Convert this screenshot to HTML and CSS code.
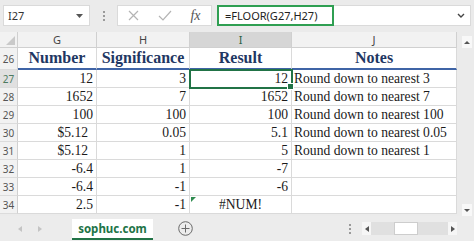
FILE: index.html
```html
<!DOCTYPE html>
<html lang="en">
<head>
    <meta charset="UTF-8">
    <title>FLOOR function</title>
    <link rel="stylesheet" href="styles.css">
</head>
<body>
    <div class="formula-bar">
        <div class="name-box">
            <span>I27</span>
            <svg width="7" height="4" viewBox="0 0 7 4"><path d="M0 0h7L3.5 4z" fill="#555"/></svg>
        </div>
        <div class="grip"><i></i><i></i><i></i></div>
        <div class="fx-box">
            <span class="fx-btn">
                <svg width="11" height="11" viewBox="0 0 11 11"><path d="M1 1l9 9M10 1l-9 9" stroke="#b4b4b4" stroke-width="1.2"/></svg>
            </span>
            <span class="fx-btn">
                <svg width="14" height="11" viewBox="0 0 14 11"><path d="M1 6l4 4 8-9" stroke="#b4b4b4" stroke-width="1.2" fill="none"/></svg>
            </span>
            <span class="fx-btn fx">fx</span>
        </div>
        <div class="formula">
            <span class="formula-text">=FLOOR(G27,H27)</span>
            <svg class="chevron" width="8" height="5" viewBox="0 0 8 5"><path d="M1 1l3 3 3-3" stroke="#444" stroke-width="1.4" fill="none"/></svg>
        </div>
    </div>

    <div class="workspace">
        <div class="sheet">
            <div class="corner"></div>
            <div class="col-head">G</div>
            <div class="col-head">H</div>
            <div class="col-head selected">I</div>
            <div class="col-head">J</div>

            <div class="row-head">26</div>
            <div class="cell title">Number</div>
            <div class="cell title">Significance</div>
            <div class="cell title">Result</div>
            <div class="cell title">Notes</div>

            <div class="row-head selected">27</div>
            <div class="cell num">12</div>
            <div class="cell num">3</div>
            <div class="cell num active">12</div>
            <div class="cell">Round down to nearest 3</div>

            <div class="row-head">28</div>
            <div class="cell num">1652</div>
            <div class="cell num">7</div>
            <div class="cell num">1652</div>
            <div class="cell">Round down to nearest 7</div>

            <div class="row-head">29</div>
            <div class="cell num">100</div>
            <div class="cell num">100</div>
            <div class="cell num">100</div>
            <div class="cell">Round down to nearest 100</div>

            <div class="row-head">30</div>
            <div class="cell num cur">$5.12</div>
            <div class="cell num">0.05</div>
            <div class="cell num">5.1</div>
            <div class="cell">Round down to nearest 0.05</div>

            <div class="row-head">31</div>
            <div class="cell num cur">$5.12</div>
            <div class="cell num">1</div>
            <div class="cell num">5</div>
            <div class="cell">Round down to nearest 1</div>

            <div class="row-head">32</div>
            <div class="cell num">-6.4</div>
            <div class="cell num">1</div>
            <div class="cell num">-7</div>
            <div class="cell"></div>

            <div class="row-head">33</div>
            <div class="cell num">-6.4</div>
            <div class="cell num">-1</div>
            <div class="cell num">-6</div>
            <div class="cell"></div>

            <div class="row-head">34</div>
            <div class="cell num">2.5</div>
            <div class="cell num">-1</div>
            <div class="cell error">#NUM!</div>
            <div class="cell"></div>
        </div>

        <div class="vscroll">
            <span class="arrow-btn up"></span>
            <span class="arrow-btn down"></span>
        </div>
    </div>

    <div class="tab-bar">
        <div class="tab-nav">
            <span class="tri left"></span>
            <span class="tri right"></span>
        </div>
        <div class="tab">sophuc.com</div>
        <div class="add-sheet">
            <svg width="15" height="15" viewBox="0 0 15 15">
                <circle cx="7.5" cy="7.5" r="6.8" stroke="#6a6a6a" fill="none"/>
                <path d="M7.5 3.5v8M3.5 7.5h8" stroke="#6a6a6a"/>
            </svg>
        </div>
        <div class="hscroll">
            <div class="grip small"><i></i><i></i><i></i></div>
            <span class="h-btn"><span class="tri left dark"></span></span>
            <div class="track"><span class="thumb"></span></div>
            <span class="h-btn"><span class="tri right dark"></span></span>
        </div>
    </div>
</body>
</html>
```

FILE: styles.css
```css
* {
    box-sizing: border-box;
}
body {
    margin: 0;
    width: 474px;
    height: 241px;
    overflow: hidden;
    background: #ebebeb;
    font-family: "Noto Sans", sans-serif;
    color: #222;
}

/* formula bar */
.formula-bar {
    display: flex;
    align-items: flex-start;
    height: 32px;
    padding: 5px 3px 0 3px;
}
.name-box {
    width: 87px;
    height: 21px;
    background: #fff;
    border: 1px solid #dadada;
    display: flex;
    align-items: center;
    justify-content: space-between;
    padding: 0 6px 0 4px;
    font-size: 11px;
    color: #333;
}
.grip {
    width: 27px;
    height: 21px;
    display: flex;
    flex-direction: column;
    align-items: center;
    justify-content: center;
    gap: 2px;
}
.grip i {
    width: 2px;
    height: 2px;
    background: #9a9a9a;
}
.fx-box {
    width: 95px;
    height: 21px;
    background: #fff;
    border: 1px solid #dadada;
    display: flex;
    align-items: center;
}
.fx-btn {
    width: 31px;
    display: flex;
    justify-content: center;
    align-items: center;
}
.fx {
    font-family: "Liberation Serif", serif;
    font-style: italic;
    font-size: 14px;
    color: #555;
}
.formula {
    flex: 1;
    margin-left: 5px;
    height: 21px;
    background: #fff;
    border: 1px solid #dadada;
    display: flex;
    align-items: center;
}
.formula-text {
    width: 117px;
    height: 21px;
    margin: -1px 0 0 -1px;
    border: 2px solid #2f9f52;
    display: flex;
    align-items: center;
    padding-left: 6px;
    font-size: 11px;
    color: #222;
}
.chevron {
    margin-left: auto;
    margin-right: 5px;
}

/* sheet */
.workspace {
    display: flex;
    height: 184px;
}
.sheet {
    width: 457px;
    display: grid;
    grid-template-columns: 18px 79px 93px 102px 165px;
    grid-template-rows: 16px 22px repeat(8, 18px);
    background: #fff;
    align-self: flex-start;
}
.corner {
    background: #f2f2f2;
    border-right: 1px solid #d0d0d0;
    border-bottom: 1px solid #d0d0d0;
    position: relative;
}
.corner::after {
    content: "";
    position: absolute;
    right: 2px;
    bottom: 2px;
    border-left: 9px solid transparent;
    border-bottom: 9px solid #c9c9c9;
}
.col-head {
    background: #f2f2f2;
    border-right: 1px solid #d0d0d0;
    border-bottom: 1px solid #d0d0d0;
    display: flex;
    align-items: center;
    justify-content: center;
    font-size: 11px;
    color: #444;
}
.col-head.selected {
    background: #d6d6d6;
    color: #2a5f40;
}
.row-head {
    background: #f2f2f2;
    border-right: 1px solid #d0d0d0;
    border-bottom: 1px solid #dcdcdc;
    display: flex;
    align-items: center;
    justify-content: center;
    font-size: 10px;
    color: #555;
}
.row-head.selected {
    background: #e0e0e0;
    color: #4d7a60;
}
.cell {
    border-right: 1px solid #dadada;
    border-bottom: 1px solid #dadada;
    display: flex;
    align-items: center;
    padding: 0 2px;
    font-family: "Liberation Serif", serif;
    font-size: 13.6px;
    color: #1a1a1a;
    white-space: nowrap;
    position: relative;
}
.num {
    justify-content: flex-end;
    padding-right: 3px;
}
.cur {
    padding-right: 8px;
}
.title {
    justify-content: center;
    font-weight: bold;
    font-size: 16px;
    color: #1f3763;
    border-bottom: 2px solid #3f64a6;
}
.active {
    outline: 2px solid #217346;
    outline-offset: -1px;
    z-index: 1;
}
.active::after {
    content: "";
    position: absolute;
    right: -3px;
    bottom: -3px;
    width: 5px;
    height: 5px;
    background: #217346;
    border: 1px solid #fff;
}
.error {
    justify-content: center;
}
.error::before {
    content: "";
    position: absolute;
    top: 1px;
    left: 1px;
    border-top: 5px solid #2e8b4f;
    border-right: 5px solid transparent;
}

.vscroll {
    width: 17px;
    display: flex;
    flex-direction: column;
    justify-content: space-between;
    padding: 4px 2px 0 5px;
}
.arrow-btn {
    width: 10px;
    height: 12px;
    background: #f8f8f8;
    display: flex;
    align-items: center;
    justify-content: center;
}
.arrow-btn::after {
    content: "";
    border-left: 3px solid transparent;
    border-right: 3px solid transparent;
}
.arrow-btn.up::after {
    border-bottom: 3px solid #555;
}
.arrow-btn.down::after {
    border-top: 3px solid #555;
}

/* sheet tabs */
.tab-bar {
    display: flex;
    align-items: center;
    height: 25px;
    background: #ececec;
}
.tab-nav {
    width: 72px;
    display: flex;
    gap: 16px;
    padding-left: 18px;
}
.tri {
    width: 0;
    height: 0;
    border-top: 3.5px solid transparent;
    border-bottom: 3.5px solid transparent;
}
.tri.left {
    border-right: 4px solid #c4c4c4;
}
.tri.right {
    border-left: 4px solid #c4c4c4;
}
.tri.dark.left {
    border-right-color: #555;
}
.tri.dark.right {
    border-left-color: #555;
}
.tab {
    width: 81px;
    height: 21px;
    margin-top: 2px;
    background: #fff;
    border-bottom: 2px solid #217346;
    display: flex;
    align-items: center;
    justify-content: center;
    font-size: 11.5px;
    font-weight: bold;
    color: #217346;
}
.add-sheet {
    margin-left: 25px;
    display: flex;
}
.hscroll {
    margin-left: auto;
    margin-right: 17px;
    width: 112px;
    display: flex;
    align-items: center;
}
.grip.small {
    width: 10px;
    height: 13px;
    margin-right: 7px;
}
.h-btn {
    width: 9px;
    height: 13px;
    background: #f6f6f6;
    display: flex;
    align-items: center;
    justify-content: center;
}
.track {
    flex: 1;
    height: 13px;
    background: #e0e0e0;
    display: flex;
}
.thumb {
    width: 24px;
    margin-left: 23px;
    background: #fff;
    border: 1px solid #cdcdcd;
}
```
